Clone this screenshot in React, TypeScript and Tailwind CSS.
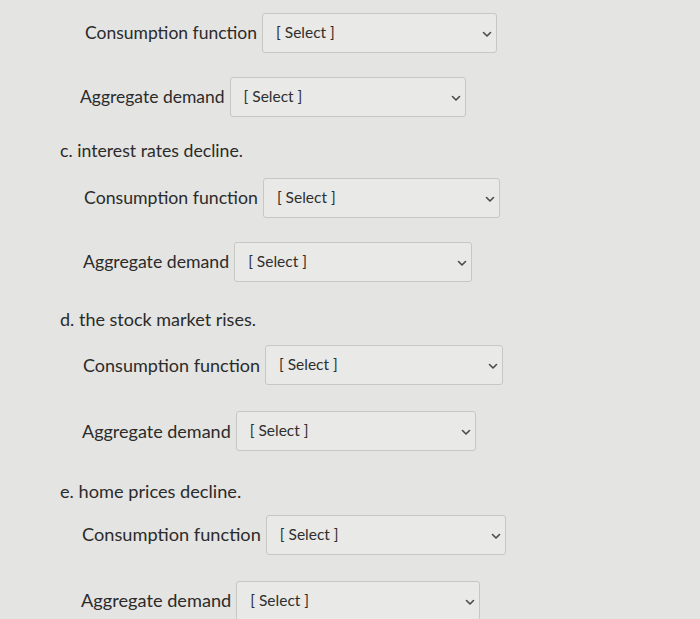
type Row = { label: string; indent: string; width: string };

type Section = {
  title?: string;
  top: string; // space above the heading (or above first row)
  below: string; // space between heading and first row
  gap: string; // space between the two rows
  size: string; // photo is slightly tilted, text grows toward the bottom
  rows: Row[];
};

const sections: Section[] = [
  {
    top: "pt-[13px]",
    below: "",
    gap: "gap-[24px]",
    size: "text-[17.5px]",
    rows: [
      { label: "Consumption function", indent: "ml-[85px]", width: "w-[235px]" },
      { label: "Aggregate demand", indent: "ml-[80px]", width: "w-[236px]" },
    ],
  },
  {
    title: "c. interest rates decline.",
    top: "pt-[22px]",
    below: "mb-[15px]",
    gap: "gap-[24px]",
    size: "text-[17.7px]",
    rows: [
      { label: "Consumption function", indent: "ml-[84px]", width: "w-[237px]" },
      { label: "Aggregate demand", indent: "ml-[83px]", width: "w-[238px]" },
    ],
  },
  {
    title: "d. the stock market rises.",
    top: "pt-[25px]",
    below: "mb-[14px]",
    gap: "gap-[26px]",
    size: "text-[18px]",
    rows: [
      { label: "Consumption function", indent: "ml-[83px]", width: "w-[238px]" },
      { label: "Aggregate demand", indent: "ml-[82px]", width: "w-[240px]" },
    ],
  },
  {
    title: "e. home prices decline.",
    top: "pt-[28px]",
    below: "mb-[12px]",
    gap: "gap-[26px]",
    size: "text-[18.2px]",
    rows: [
      { label: "Consumption function", indent: "ml-[82px]", width: "w-[240px]" },
      { label: "Aggregate demand", indent: "ml-[81px]", width: "w-[244px]" },
    ],
  },
];

function SelectBox({ width }: { width: string }) {
  return (
    <div
      className={`${width} h-[40px] flex items-center justify-between pl-[13px] pr-[4px] rounded-[3px] border border-[#c7c7c4] bg-[#e9e9e7]`}
    >
      <span className="text-[15.5px] text-[#2f2f2f]">[ Select ]</span>
      <svg width="10" height="10" viewBox="0 0 10 10" className="mt-[2px]">
        <path
          d="M1.5 3.5 L5 7 L8.5 3.5"
          fill="none"
          stroke="#4a4a4a"
          strokeWidth="1.6"
          strokeLinecap="round"
          strokeLinejoin="round"
        />
      </svg>
    </div>
  );
}

export default function App() {
  return (
    <div
      className="min-h-[619px] w-[700px] overflow-hidden bg-[#e4e4e2] text-[#2b2b2b]"
      style={{ fontFamily: "Lato, 'Open Sans', sans-serif" }}
    >
      {sections.map((s, i) => (
        <div key={i} className={`${s.top} ${s.size}`}>
          {s.title && (
            <div className={`ml-[60px] ${s.below} h-[24px] leading-[24px]`}>{s.title}</div>
          )}
          <div className={`flex flex-col ${s.gap}`}>
            {s.rows.map((r) => (
              <div key={r.label} className={`${r.indent} flex items-center gap-[5px]`}>
                <span>{r.label}</span>
                <SelectBox width={r.width} />
              </div>
            ))}
          </div>
        </div>
      ))}
    </div>
  );
}
